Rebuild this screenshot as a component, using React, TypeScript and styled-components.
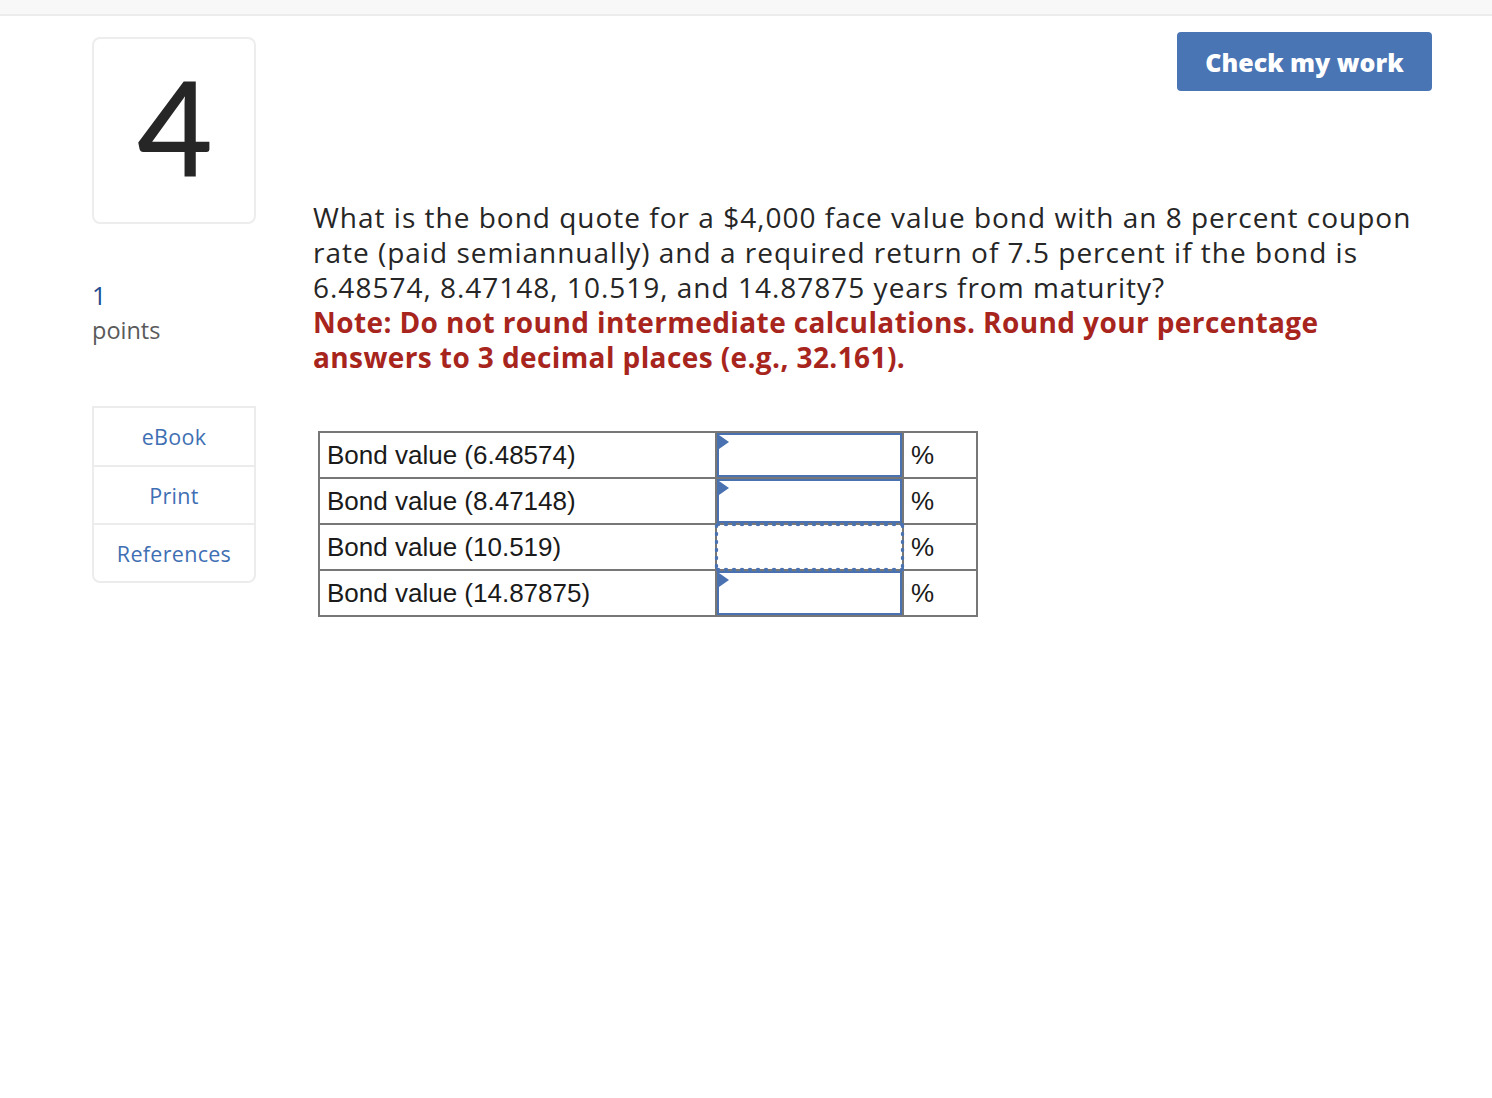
import React from "react";
import styled, { createGlobalStyle } from "styled-components";

const GlobalStyle = createGlobalStyle`
  html, body { margin: 0; padding: 0; background: #ffffff; }
  body { font-family: "Open Sans", "Lato", sans-serif; color: #222; }
`;

const TopStrip = styled.div`
  height: 14px;
  background: #f8f8f8;
  border-bottom: 2px solid #ececec;
`;

const Page = styled.div`
  display: flex;
  padding: 16px 60px 0 92px;
`;

const Sidebar = styled.aside`
  width: 164px;
  flex: none;
  display: flex;
  flex-direction: column;
  padding-top: 5px;
`;

const NumberBox = styled.div`
  box-sizing: border-box;
  height: 187px;
  border: 2px solid #ededed;
  border-radius: 8px;
  display: flex;
  align-items: center;
  justify-content: center;
  font-family: "Lato", sans-serif;
  font-size: 131px;
  font-weight: 500;
  color: #262626;
  line-height: 1;
  padding-bottom: 10px;
  padding-left: 2px;
`;

const Points = styled.div`
  margin-top: 53px;
  display: flex;
  flex-direction: column;
`;

const PointValue = styled.span`
  font-size: 25px;
  line-height: 36px;
  color: #1f4c8f;
`;

const PointLabel = styled.span`
  font-size: 23.5px;
  line-height: 34px;
  color: #5a5a5a;
`;

const LinkList = styled.nav`
  margin-top: 59px;
  border: 2px solid #ececec;
  border-radius: 0 0 8px 8px;
  display: flex;
  flex-direction: column;
`;

const LinkItem = styled.a<{ $h: number }>`
  height: ${(p) => p.$h}px;
  display: flex;
  align-items: center;
  justify-content: center;
  font-size: 21.5px;
  letter-spacing: 0.3px;
  color: #3f6fb3;
  text-decoration: none;
  & + & { border-top: 2px solid #ececec; }
`;

const Main = styled.main`
  flex: 1;
  margin-left: 57px;
  display: flex;
  flex-direction: column;
  align-items: flex-start;
`;

const ButtonRow = styled.div`
  align-self: stretch;
  display: flex;
  justify-content: flex-end;
`;

const CheckButton = styled.button`
  width: 255px;
  height: 59px;
  border: none;
  border-radius: 4px;
  background: #4a75b5;
  color: #fff;
  font-family: "Open Sans", sans-serif;
  font-weight: 800;
  font-size: 25px;
  cursor: pointer;
`;

const Question = styled.div`
  margin-top: 109px;
  font-size: 28px;
  line-height: 35px;
  color: #262626;
  white-space: nowrap;
`;

const Line = styled.div<{ $note?: boolean }>`
  font-weight: ${(p) => (p.$note ? 700 : 400)};
  letter-spacing: ${(p) => (p.$note ? 0.4 : 1)}px;
  color: ${(p) => (p.$note ? "#a8251d" : "#262626")};
`;

const Table = styled.table`
  margin-top: 56px;
  margin-left: 5px;
  border-collapse: collapse;
  table-layout: fixed;
  width: 658px;
  font-family: "Liberation Sans", Arial, sans-serif;
  font-size: 26px;
  color: #1a1a1a;
`;

const Cell = styled.td<{ $pad?: boolean }>`
  border: 2px solid #777777;
  height: 42px;
  padding: 0 ${(p) => (p.$pad ? 7 : 0)}px;
  box-sizing: border-box;
  vertical-align: middle;
  white-space: nowrap;
`;

const dot = "radial-gradient(circle, #4a72b0 1.7px, transparent 2.1px)";

const InputBox = styled.div<{ $focused?: boolean }>`
  position: relative;
  box-sizing: border-box;
  height: ${(p) => (p.$focused ? 50 : 44)}px;
  margin: ${(p) => (p.$focused ? "-3px -3px" : "0")};
  border: ${(p) => (p.$focused ? "none" : "2px solid #4a72b0")};
  background: ${(p) =>
    p.$focused
      ? `${dot} left top / 8px 5px repeat-x, ${dot} left bottom / 8px 5px repeat-x, ${dot} left top / 5px 8px repeat-y, ${dot} right top / 5px 8px repeat-y`
      : "#fff"};
`;

const Flag = styled.span`
  position: absolute;
  left: 0;
  top: 0;
  width: 0;
  height: 0;
  border-top: 7px solid transparent;
  border-bottom: 7px solid transparent;
  border-left: 10px solid #4a72b0;
`;

const rows = [
  { label: "Bond value (6.48574)", focused: false },
  { label: "Bond value (8.47148)", focused: false },
  { label: "Bond value (10.519)", focused: true },
  { label: "Bond value (14.87875)", focused: false },
];

export default function App() {
  return (
    <>
      <GlobalStyle />
      <TopStrip />
      <Page>
        <Sidebar>
          <NumberBox>4</NumberBox>
          <Points>
            <PointValue>1</PointValue>
            <PointLabel>points</PointLabel>
          </Points>
          <LinkList>
            <LinkItem $h={57}>eBook</LinkItem>
            <LinkItem $h={56}>Print</LinkItem>
            <LinkItem $h={56}>References</LinkItem>
          </LinkList>
        </Sidebar>
        <Main>
          <ButtonRow>
            <CheckButton>Check my work</CheckButton>
          </ButtonRow>
          <Question>
            <Line>What is the bond quote for a $4,000 face value bond with an 8 percent coupon</Line>
            <Line>rate (paid semiannually) and a required return of 7.5 percent if the bond is</Line>
            <Line>6.48574, 8.47148, 10.519, and 14.87875 years from maturity?</Line>
            <Line $note>Note: Do not round intermediate calculations. Round your percentage</Line>
            <Line $note>answers to 3 decimal places (e.g., 32.161).</Line>
          </Question>
          <Table>
            <colgroup>
              <col style={{ width: 397 }} />
              <col style={{ width: 187 }} />
              <col style={{ width: 74 }} />
            </colgroup>
            <tbody>
              {rows.map((r) => (
                <tr key={r.label}>
                  <Cell $pad>{r.label}</Cell>
                  <Cell>
                    <InputBox $focused={r.focused}>{!r.focused && <Flag />}</InputBox>
                  </Cell>
                  <Cell $pad>%</Cell>
                </tr>
              ))}
            </tbody>
          </Table>
        </Main>
      </Page>
    </>
  );
}
